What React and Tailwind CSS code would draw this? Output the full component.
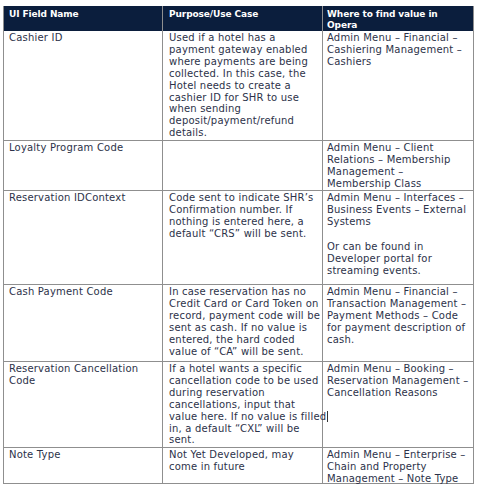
import React from "react";

const rows = [
  {
    h: "h-[110px]",
    c1: ["Cashier ID"],
    c2: [
      "Used if a hotel has a",
      "payment gateway enabled",
      "where payments are being",
      "collected. In this case, the",
      "Hotel needs to create a",
      "cashier ID for SHR to use",
      "when sending",
      "deposit/payment/refund",
      "details.",
    ],
    c3: ["Admin Menu – Financial –", "Cashiering Management –", "Cashiers"],
  },
  {
    h: "h-[50px]",
    c1: ["Loyalty Program Code"],
    c2: [],
    c3: ["Admin Menu – Client", "Relations – Membership", "Management –", "Membership Class"],
  },
  {
    h: "h-[94px]",
    c1: ["Reservation IDContext"],
    c2: [
      "Code sent to indicate SHR’s",
      "Confirmation number. If",
      "nothing is entered here, a",
      "default “CRS” will be sent.",
    ],
    c3: [
      "Admin Menu – Interfaces –",
      "Business Events – External",
      "Systems",
      "",
      "Or can be found in",
      "Developer portal for",
      "streaming events.",
    ],
  },
  {
    h: "h-[77px]",
    c1: ["Cash Payment Code"],
    c2: [
      "In case reservation has no",
      "Credit Card or Card Token on",
      "record, payment code will be",
      "sent as cash. If no value is",
      "entered, the hard coded",
      "value of “CA” will be sent.",
    ],
    c3: [
      "Admin Menu – Financial –",
      "Transaction Management –",
      "Payment Methods – Code",
      "for payment description of",
      "cash.",
    ],
  },
  {
    h: "h-[86px]",
    c1: ["Reservation Cancellation", "Code"],
    c2: [
      "If a hotel wants a specific",
      "cancellation code to be used",
      "during reservation",
      "cancellations, input that",
      "CURSOR",
      "in, a default “CXL” will be",
      "sent.",
    ],
    c3: ["Admin Menu – Booking –", "Reservation Management –", "Cancellation Reasons"],
  },
  {
    h: "h-[36px]",
    c1: ["Note Type"],
    c2: ["Not Yet Developed, may", "come in future"],
    c3: ["Admin Menu – Enterprise –", "Chain and Property", "Management – Note Type"],
  },
];

function Lines({ lines }) {
  return (
    <div className="pt-[1px]">
      {lines.map((l, i) =>
        l === "" ? (
          <div key={i} className="h-[13px]" />
        ) : l === "CURSOR" ? (
          <div key={i} className="whitespace-nowrap">
            value here. If no value is filled
            <span className="inline-block w-[1px] h-[11px] bg-[#333] align-middle ml-[1px]" />
          </div>
        ) : (
          <div key={i} className="whitespace-nowrap">
            {l}
          </div>
        )
      )}
    </div>
  );
}

export default function App() {
  return (
    <div className="w-[483px] h-[490px] bg-white pt-[6px] pl-[3px]">
      <div
        className="w-[471px] border-l border-[#8f8f8f] text-[10px] leading-[11.9px] text-[#2c3249] tracking-[0.2px]"
        style={{ fontFamily: '"DejaVu Sans", "Open Sans", sans-serif' }}
      >
        <div className="flex h-[25px] bg-[#0b1e3d] text-white font-bold leading-[10.7px] text-[9px] tracking-[-0.1px]">
          <div className="w-[159px] border-r border-[#8f8f8f] px-[5px] pt-[3px]">UI Field Name</div>
          <div className="w-[160px] border-r border-[#8f8f8f] px-[6px] pt-[3px]">Purpose/Use Case</div>
          <div className="w-[151px] border-r border-[#8f8f8f] px-[4px] pt-[3px]">
            <div>Where to find value in</div>
            <div>Opera</div>
          </div>
        </div>
        {rows.map((r, i) => (
          <div key={i} className={`flex ${r.h} border-b border-[#8f8f8f]`}>
            <div className="w-[159px] border-r border-[#8f8f8f] px-[5px]">
              <Lines lines={r.c1} />
            </div>
            <div className="w-[160px] border-r border-[#8f8f8f] px-[6px]">
              <Lines lines={r.c2} />
            </div>
            <div className="w-[151px] border-r border-[#8f8f8f] px-[4px]">
              <Lines lines={r.c3} />
            </div>
          </div>
        ))}
      </div>
    </div>
  );
}
